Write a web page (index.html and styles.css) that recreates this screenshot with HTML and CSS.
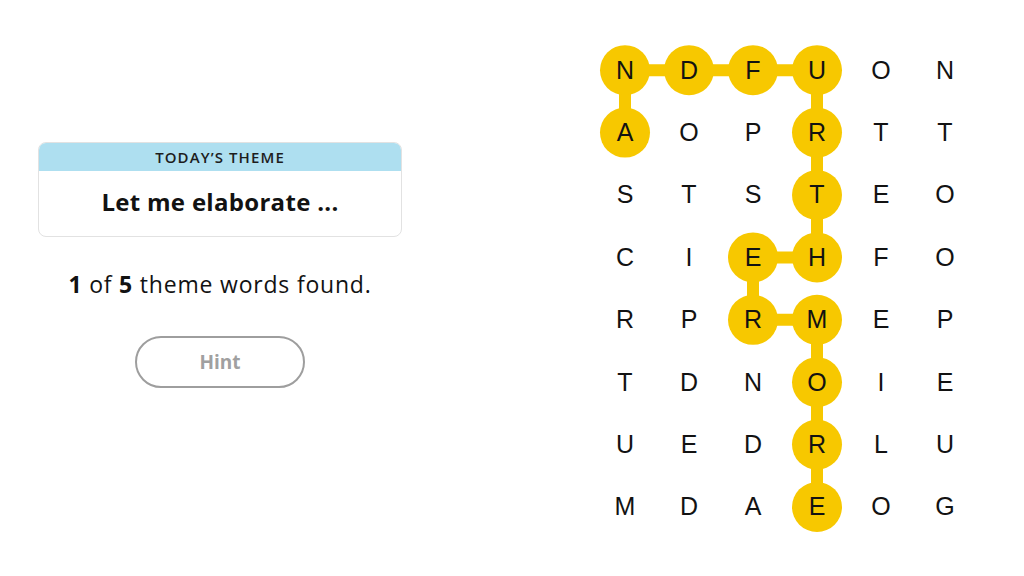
FILE: index.html
```html
<!DOCTYPE html>
<html lang="en">
<head>
<meta charset="utf-8">
<title>Strands</title>
<link rel="stylesheet" href="styles.css">
</head>
<body>
<main class="game">
  <section class="side">
    <div class="theme-card">
      <div class="theme-head">TODAY’S THEME</div>
      <div class="theme-body">Let me elaborate ...</div>
    </div>
    <p class="status"><b>1</b> of <b>5</b> theme words found.</p>
    <button class="hint">Hint</button>
  </section>
  <section class="board">
    <svg class="trail" width="384" height="500" viewBox="0 0 384 500" aria-hidden="true">
      <g stroke="#f7c800" stroke-width="12" stroke-linecap="round" fill="none">
        <line x1="32" y1="31.2" x2="224" y2="31.2"/>
        <line x1="32" y1="31.2" x2="32" y2="93.6"/>
        <line x1="224" y1="31.2" x2="224" y2="218.4"/>
        <line x1="224" y1="280.8" x2="224" y2="468"/>
        <line x1="160" y1="218.4" x2="224" y2="218.4"/>
        <line x1="160" y1="218.4" x2="160" y2="280.8"/>
        <line x1="160" y1="280.8" x2="224" y2="280.8"/>
      </g>
      <g fill="#f7c800">
        <circle cx="32" cy="31.2" r="25"/>
        <circle cx="96" cy="31.2" r="25"/>
        <circle cx="160" cy="31.2" r="25"/>
        <circle cx="224" cy="31.2" r="25"/>
        <circle cx="32" cy="93.6" r="25"/>
        <circle cx="224" cy="93.6" r="25"/>
        <circle cx="224" cy="156" r="25"/>
        <circle cx="224" cy="218.4" r="25"/>
        <circle cx="160" cy="218.4" r="25"/>
        <circle cx="160" cy="280.8" r="25"/>
        <circle cx="224" cy="280.8" r="25"/>
        <circle cx="224" cy="343.2" r="25"/>
        <circle cx="224" cy="405.6" r="25"/>
        <circle cx="224" cy="468" r="25"/>
      </g>
    </svg>
    <div class="letters">
      <span>N</span><span>D</span><span>F</span><span>U</span><span>O</span><span>N</span>
      <span>A</span><span>O</span><span>P</span><span>R</span><span>T</span><span>T</span>
      <span>S</span><span>T</span><span>S</span><span>T</span><span>E</span><span>O</span>
      <span>C</span><span>I</span><span>E</span><span>H</span><span>F</span><span>O</span>
      <span>R</span><span>P</span><span>R</span><span>M</span><span>E</span><span>P</span>
      <span>T</span><span>D</span><span>N</span><span>O</span><span>I</span><span>E</span>
      <span>U</span><span>E</span><span>D</span><span>R</span><span>L</span><span>U</span>
      <span>M</span><span>D</span><span>A</span><span>E</span><span>O</span><span>G</span>
    </div>
  </section>
</main>
</body>
</html>
```

FILE: styles.css
```css
* { box-sizing: border-box; }

html, body {
  margin: 0;
  padding: 0;
  background: #ffffff;
  color: #121212;
  font-family: "Liberation Sans", Arial, sans-serif;
}

.game {
  display: flex;
  align-items: flex-start;
  width: 1024px;
  height: 576px;
}

.side {
  width: 364px;
  margin-left: 38px;
  padding-top: 142px;
  display: flex;
  flex-direction: column;
  align-items: center;
  font-family: "Open Sans", "Liberation Sans", sans-serif;
}

.theme-card {
  width: 100%;
  border: 1px solid #e2e2e2;
  border-radius: 8px;
  overflow: hidden;
  background: #fff;
}

.theme-head {
  height: 28px;
  background: #aedff0;
  display: flex;
  align-items: center;
  justify-content: center;
  font-size: 15px;
  font-weight: 600;
  letter-spacing: 1.1px;
  color: #1d1d1d;
}

.theme-body {
  height: 65px;
  padding-bottom: 5px;
  display: flex;
  align-items: center;
  justify-content: center;
  font-size: 24px;
  font-weight: 700;
  letter-spacing: 0.3px;
  color: #121212;
}

.status {
  margin: 34px 0 0;
  font-size: 23px;
  line-height: 26px;
  letter-spacing: 0.8px;
  color: #121212;
}

.status b { font-weight: 700; }

.hint {
  margin-top: 39px;
  width: 170px;
  height: 52px;
  border: 2px solid #9e9e9e;
  border-radius: 26px;
  background: #fff;
  color: #a0a0a0;
  font-family: inherit;
  font-size: 19px;
  font-weight: 700;
}

.board {
  position: relative;
  margin-left: 191px;
  margin-top: 39px;
  width: 384px;
  height: 500px;
}

.trail {
  position: absolute;
  left: 0;
  top: 0;
}

.letters {
  position: relative;
  display: grid;
  grid-template-columns: repeat(6, 64px);
  grid-template-rows: repeat(8, 62.4px);
}

.letters span {
  display: flex;
  align-items: center;
  justify-content: center;
  font-size: 25px;
  color: #121212;
}
```
